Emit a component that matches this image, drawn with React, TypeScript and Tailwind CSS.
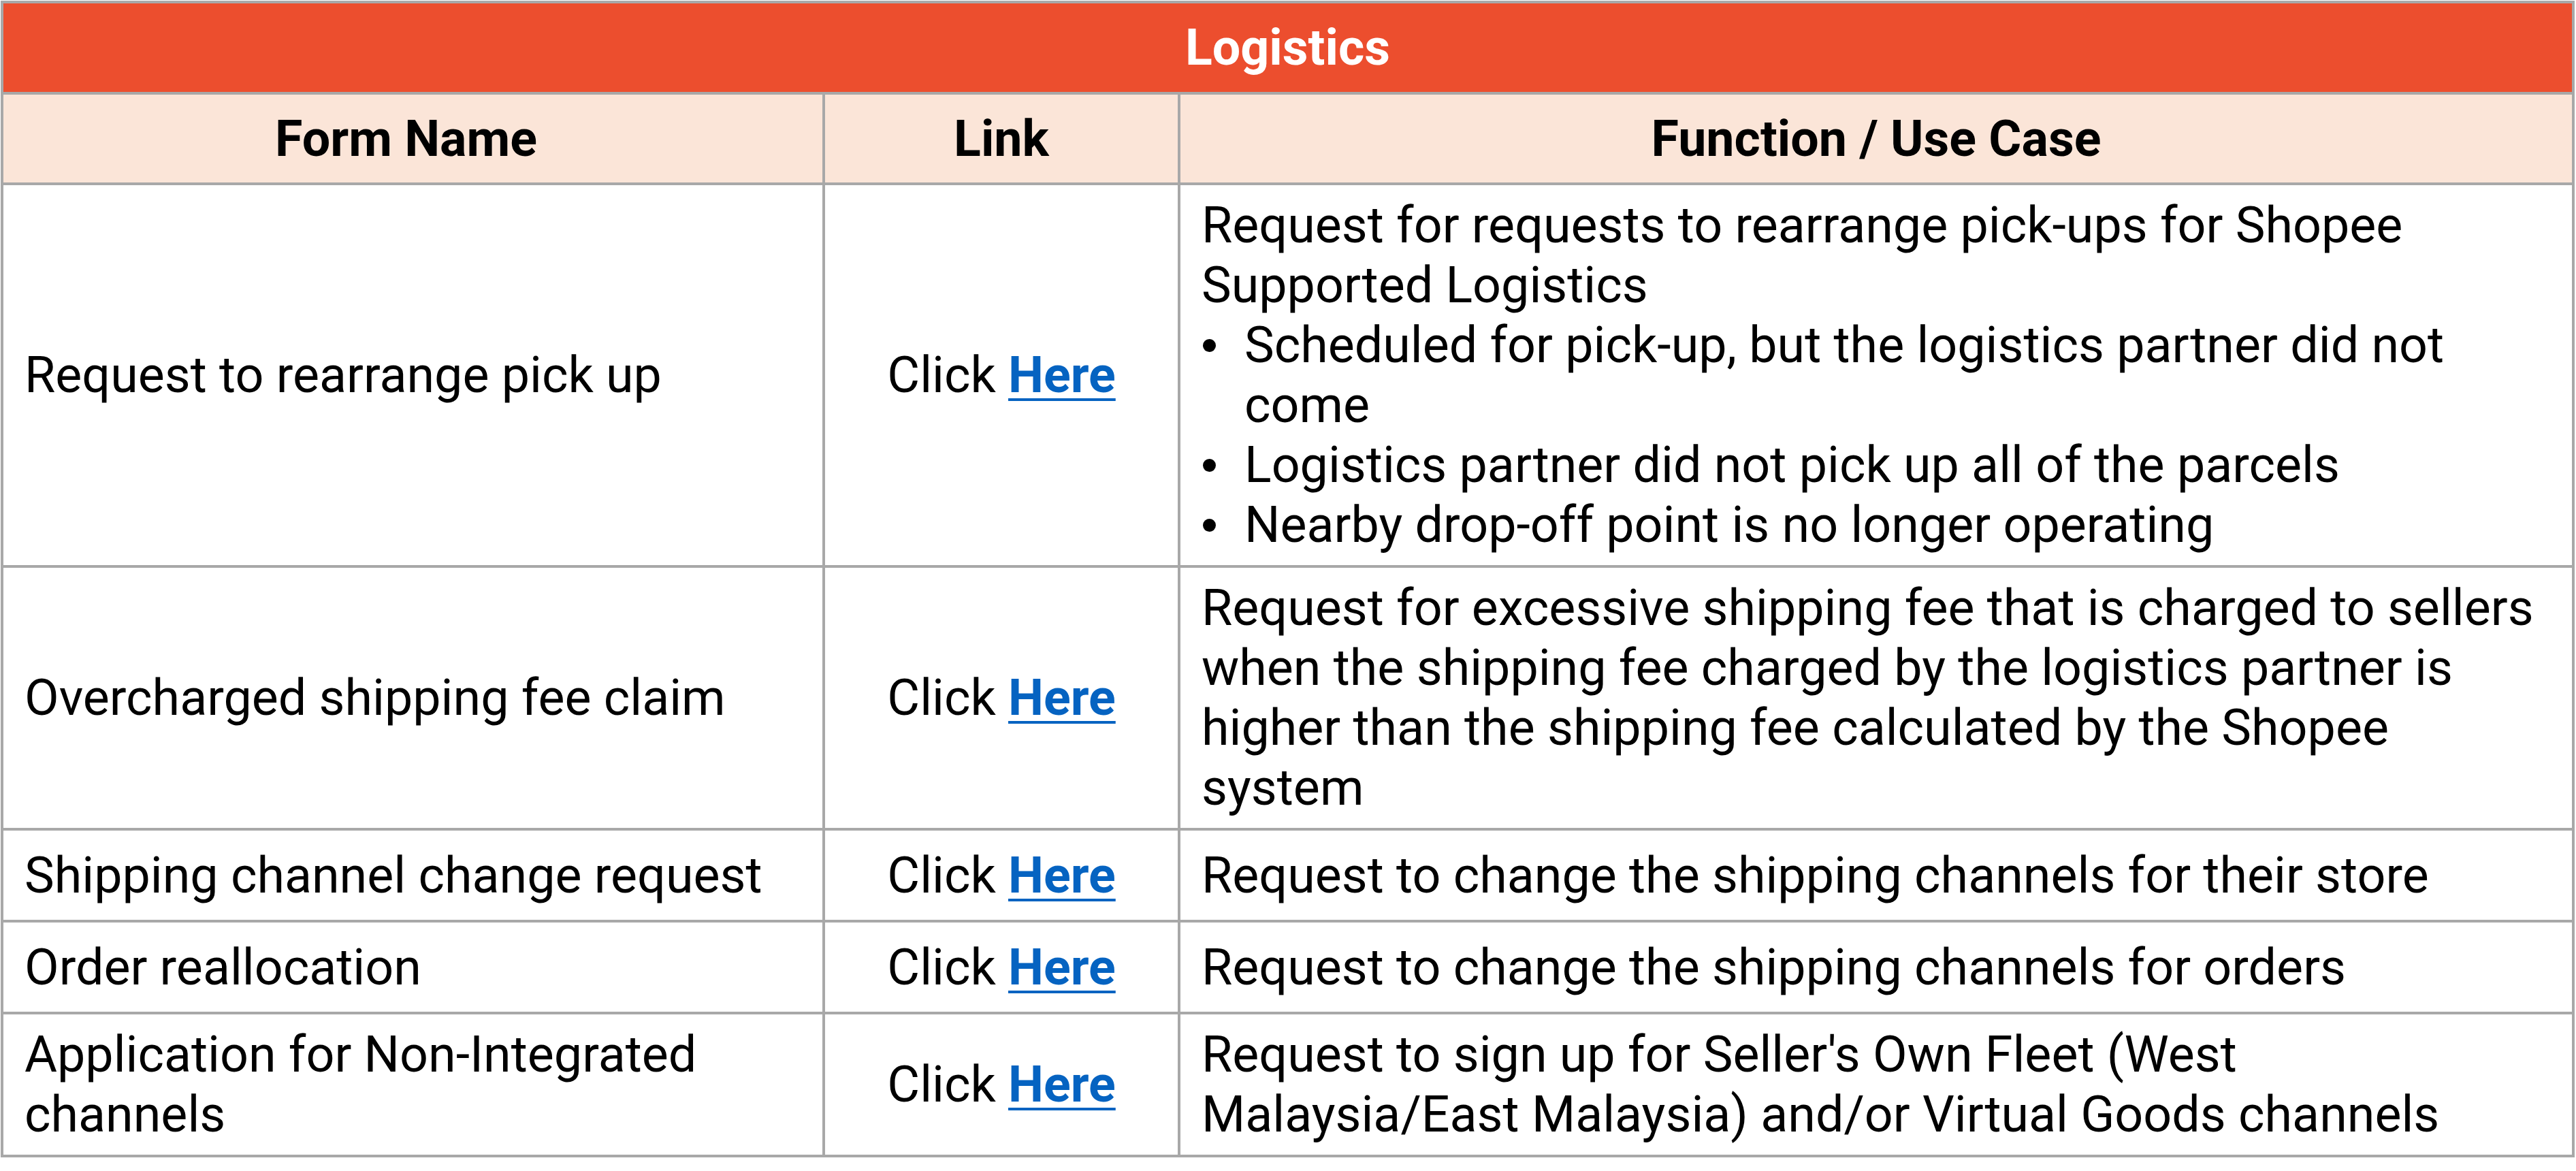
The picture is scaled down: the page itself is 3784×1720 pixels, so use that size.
import React from "react";

const cell = "bg-white flex items-center px-[31px] py-[15px] min-h-[131px]";

function Link() {
  return (
    <div className={`${cell} justify-center`}>
      <span>
        Click{" "}
        <a href="#" className="font-bold text-[#0563C1] underline decoration-[4px] underline-offset-[9px]">
          Here
        </a>
      </span>
    </div>
  );
}

function Bullet({ children }: { children: React.ReactNode }) {
  return (
    <div className="flex">
      <span className="w-[63px] h-[88px] shrink-0 flex items-center pl-[2px]">
        <span className="block w-[19px] h-[19px] rounded-full bg-black" />
      </span>
      <span>{children}</span>
    </div>
  );
}

export default function App() {
  return (
    <div className="p-[1px] bg-white w-[3784px] min-h-[1720px]">
      <div
        className="grid grid-cols-[1203px_518px_2044px] gap-[4px] bg-[#a8a8a8] p-[4px] w-[3781px] text-black text-[73.6px] leading-[88px]"
        style={{ fontFamily: "Roboto, 'Noto Sans', sans-serif" }}
      >
        <div className="col-span-3 bg-[#EC4E2E] text-white font-bold flex items-center justify-center min-h-[130px]">
          Logistics
        </div>

        <div className="bg-[#FBE5D8] font-bold flex items-center justify-center min-h-[129px] pr-[20px]">Form Name</div>
        <div className="bg-[#FBE5D8] font-bold flex items-center justify-center min-h-[129px]">Link</div>
        <div className="bg-[#FBE5D8] font-bold flex items-center justify-center min-h-[129px]">Function / Use Case</div>

        <div className={cell}>Request to rearrange pick up</div>
        <Link />
        <div className={`${cell} flex-col items-start justify-center`}>
          <div>
            Request for requests to rearrange pick-ups for Shopee
            <br />
            Supported Logistics
          </div>
          <Bullet>
            Scheduled for pick-up, but the logistics partner did not
            <br />
            come
          </Bullet>
          <Bullet>Logistics partner did not pick up all of the parcels</Bullet>
          <Bullet>Nearby drop-off point is no longer operating</Bullet>
        </div>

        <div className={cell}>Overcharged shipping fee claim</div>
        <Link />
        <div className={cell}>
          <div>
            Request for excessive shipping fee that is charged to sellers
            <br />
            when the shipping fee charged by the logistics partner is
            <br />
            higher than the shipping fee calculated by the Shopee
            <br />
            system
          </div>
        </div>

        <div className={cell}>Shipping channel change request</div>
        <Link />
        <div className={cell}>Request to change the shipping channels for their store</div>

        <div className={cell}>Order reallocation</div>
        <Link />
        <div className={cell}>Request to change the shipping channels for orders</div>

        <div className={cell}>
          <div>
            Application for Non-Integrated
            <br />
            channels
          </div>
        </div>
        <Link />
        <div className={cell}>
          <div>
            Request to sign up for Seller's Own Fleet (West
            <br />
            Malaysia/East Malaysia) and/or Virtual Goods channels
          </div>
        </div>
      </div>
    </div>
  );
}
